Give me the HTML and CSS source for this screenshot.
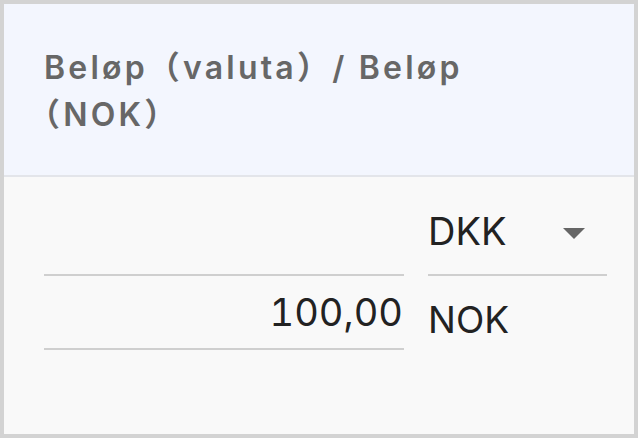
FILE: index.html
```html
<!DOCTYPE html>
<html lang="nb">
<head>
  <meta charset="UTF-8" />
  <title>Beløp</title>
  <link rel="stylesheet" href="styles.css">
</head>
<body>
<div id="amount-cell">
  <div class="cell-head">
    <div class="head-label">Beløp（valuta）/ Beløp（NOK）</div>
  </div>

  <div class="cell-body">
    <div class="field-row first">
      <div class="field amount-input"></div>
      <div class="field currency-select">
        <span>DKK</span>
        <span class="caret"></span>
      </div>
    </div>
    <div class="field-row">
      <div class="field amount-input filled">100,00</div>
      <div class="currency-fixed">NOK</div>
    </div>
  </div>
</div>
</body>
</html>
```

FILE: styles.css
```css
/* Reset default margins */
body, html {
  margin: 0;
  padding: 0;
}

body {
  font-family: Inter, "Noto Sans CJK JP", sans-serif;
}

/* Outer frame */
#amount-cell {
  width: 638px;
  height: 438px;
  box-sizing: border-box;
  border: 4px solid #d3d3d3;
  background-color: #f9f9f9;
  display: flex;
  flex-direction: column;
}

/* Column header */
.cell-head {
  background-color: #f3f6fe;
  border-bottom: 2px solid #e3e5ea;
  padding: 40px 26px 37px 40px;
}
.head-label {
  max-width: 500px;
  color: #676767;
  font-size: 32px;
  font-weight: 600;
  letter-spacing: 3.2px;
  line-height: 47px;
  text-spacing-trim: trim-start;
}

/* Inputs */
.cell-body {
  padding: 32px 26px 0 40px;
}
.field-row {
  display: grid;
  grid-template-columns: 360px 179px;
  column-gap: 24px;
  align-items: start;
}
.field {
  font-size: 38px;
  line-height: 44px;
  color: #222;
  border-bottom: 2px solid #cfcfcf;
}
.field-row.first .field {
  height: 44px;
  padding-bottom: 21px;
}
.amount-input.filled {
  text-align: right;
  font-variant-numeric: tabular-nums;
  padding: 14px 1px 14px 0;
}
.currency-select {
  display: flex;
  align-items: center;
  justify-content: space-between;
  padding-right: 22px;
}
.caret {
  width: 0;
  height: 0;
  border-left: 11px solid transparent;
  border-right: 11px solid transparent;
  border-top: 11px solid #666;
  margin-top: 4px;
}
.currency-fixed {
  font-size: 37px;
  line-height: 44px;
  color: #222;
  padding-top: 22px;
}
```
